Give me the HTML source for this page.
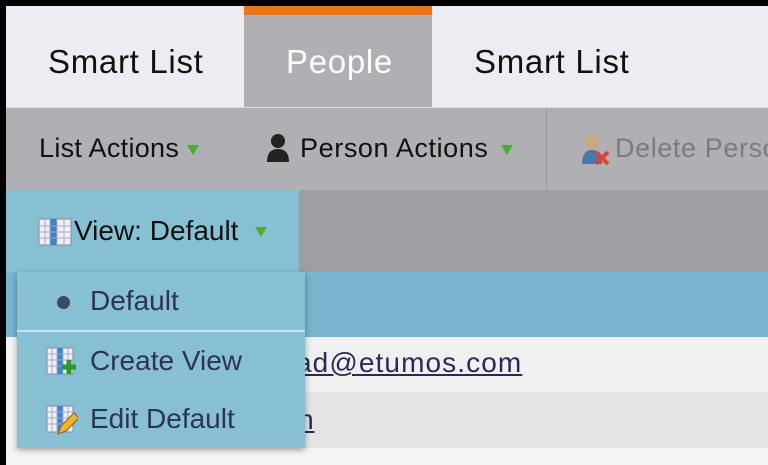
<!DOCTYPE html>
<html><head><style>
*{margin:0;padding:0;box-sizing:border-box}
body{width:768px;height:465px;overflow:hidden;background:#000;font-family:"Liberation Sans",sans-serif;position:relative}
div{position:absolute}
.t{white-space:nowrap;letter-spacing:0.6px}
</style></head><body>
<div style="left:6px;top:6px;width:762px;height:459px;background:#f4f4f4"></div>
<div style="left:6px;top:6px;width:238px;height:101px;background:#ecedf2"></div>
<div style="left:244px;top:6px;width:188px;height:101px;background:#b0afb4"></div>
<div style="left:244px;top:6px;width:188px;height:9px;background:#e8761b"></div>
<div style="left:432px;top:6px;width:336px;height:101px;background:#ecedf2"></div>
<div class="t" style="left:48px;top:43px;font-size:33px;color:#111;letter-spacing:0.7px">Smart List</div>
<div class="t" style="left:286px;top:43px;font-size:33px;color:#fff;letter-spacing:0.7px">People</div>
<div class="t" style="left:474px;top:43px;font-size:33px;color:#111;letter-spacing:0.7px">Smart List</div>
<div style="left:6px;top:107px;width:762px;height:1px;background:#dcdce0"></div>
<div style="left:6px;top:108px;width:762px;height:82px;background:#b0afb4"></div>
<div style="left:546px;top:108px;width:1px;height:82px;background:#9a999e"></div>
<div class="t" style="left:39px;top:133px;font-size:27px;color:#111;letter-spacing:0.3px">List Actions</div>
<svg style="position:absolute;left:186px;top:144px" width="14" height="12"><path d="M1 1h12l-6 10z" fill="#4cae2c"/></svg>
<svg style="position:absolute;left:266px;top:133px" width="24" height="30"><circle cx="12" cy="8" r="7" fill="#222"/><path d="M1 29c0-9 4-13 11-13s11 4 11 13z" fill="#222"/></svg>
<div class="t" style="left:300px;top:133px;font-size:27px;color:#111">Person Actions</div>
<svg style="position:absolute;left:500px;top:144px" width="14" height="12"><path d="M1 1h12l-6 10z" fill="#4cae2c"/></svg>
<svg style="position:absolute;left:580px;top:132px" width="34" height="34"><circle cx="12" cy="10" r="7" fill="#c9a880"/><path d="M2 32c0-10 4-14 10-14s10 4 10 14z" fill="#4a79a8"/><path d="M16 20l12 12M28 20l-12 12" stroke="#d9443a" stroke-width="4"/></svg>
<div class="t" style="left:615px;top:133px;font-size:27px;color:#7c7b80">Delete Person</div>
<div style="left:6px;top:190px;width:762px;height:82px;background:#9f9ea3"></div>
<div style="left:6px;top:190px;width:293px;height:82px;background:#86c0d2"></div>
<svg style="position:absolute;left:38px;top:218px" width="34" height="28"><rect x="1" y="1" width="32" height="26" fill="#eef" stroke="#889" /><rect x="12" y="1" width="7" height="26" fill="#3a84d0"/><path d="M7 1v26M12 1v26M19 1v26M26 1v26M1 8h32M1 14h32M1 20h32" stroke="#aab" stroke-width="1"/></svg>
<div class="t" style="left:74px;top:215px;font-size:28px;color:#111;letter-spacing:0">View: Default</div>
<svg style="position:absolute;left:254px;top:226px" width="14" height="12"><path d="M1 1h12l-6 10z" fill="#4cae2c"/></svg>
<div style="left:6px;top:272px;width:762px;height:65px;background:#7ab4cf"></div>
<div style="left:45px;top:337px;width:723px;height:55px;background:#f0f0f0"></div>
<div style="left:45px;top:392px;width:723px;height:56px;background:#e4e4e4"></div>
<div style="left:45px;top:448px;width:723px;height:17px;background:#f4f4f4"></div>
<div class="t" style="left:272px;top:347px;font-size:28px;color:#2a2a5a;text-decoration:underline;letter-spacing:1.1px">lead@etumos.com</div>
<div class="t" style="left:282px;top:404px;font-size:28px;color:#2a2a5a;text-decoration:underline">on</div>
<div style="left:17px;top:272px;width:288px;height:176px;background:#86c0d2;box-shadow:0 2px 6px rgba(0,0,0,.35)"></div>
<div style="left:17px;top:330px;width:288px;height:2px;background:#c4e2ec"></div>
<div style="left:57px;top:296px;width:13px;height:13px;border-radius:50%;background:#3c4a5c"></div>
<div class="t" style="left:90px;top:285px;font-size:28px;color:#2e3350;letter-spacing:0">Default</div>
<svg style="position:absolute;left:46px;top:345px" width="32" height="32"><rect x="1" y="3" width="26" height="26" fill="#eef" stroke="#889"/><rect x="11" y="3" width="6" height="26" fill="#3a84d0"/><path d="M6 3v26M11 3v26M17 3v26M22 3v26M1 9h26M1 15h26M1 21h26" stroke="#aab"/><path d="M16 22h14M23 15v14" stroke="#2a9a2a" stroke-width="5"/></svg>
<div class="t" style="left:90px;top:345px;font-size:28px;color:#2e3350;letter-spacing:0">Create View</div>
<svg style="position:absolute;left:46px;top:404px" width="32" height="32"><rect x="1" y="2" width="26" height="26" fill="#eef" stroke="#889"/><rect x="11" y="2" width="6" height="26" fill="#3a84d0"/><path d="M6 2v26M11 2v26M17 2v26M22 2v26M1 8h26M1 14h26M1 20h26" stroke="#aab"/><path d="M12 30l3-8 13-13 5 5-13 13z" fill="#f0b429" stroke="#8a5a10"/></svg>
<div class="t" style="left:90px;top:403px;font-size:28px;color:#2e3350;letter-spacing:0">Edit Default</div>
</body></html>
